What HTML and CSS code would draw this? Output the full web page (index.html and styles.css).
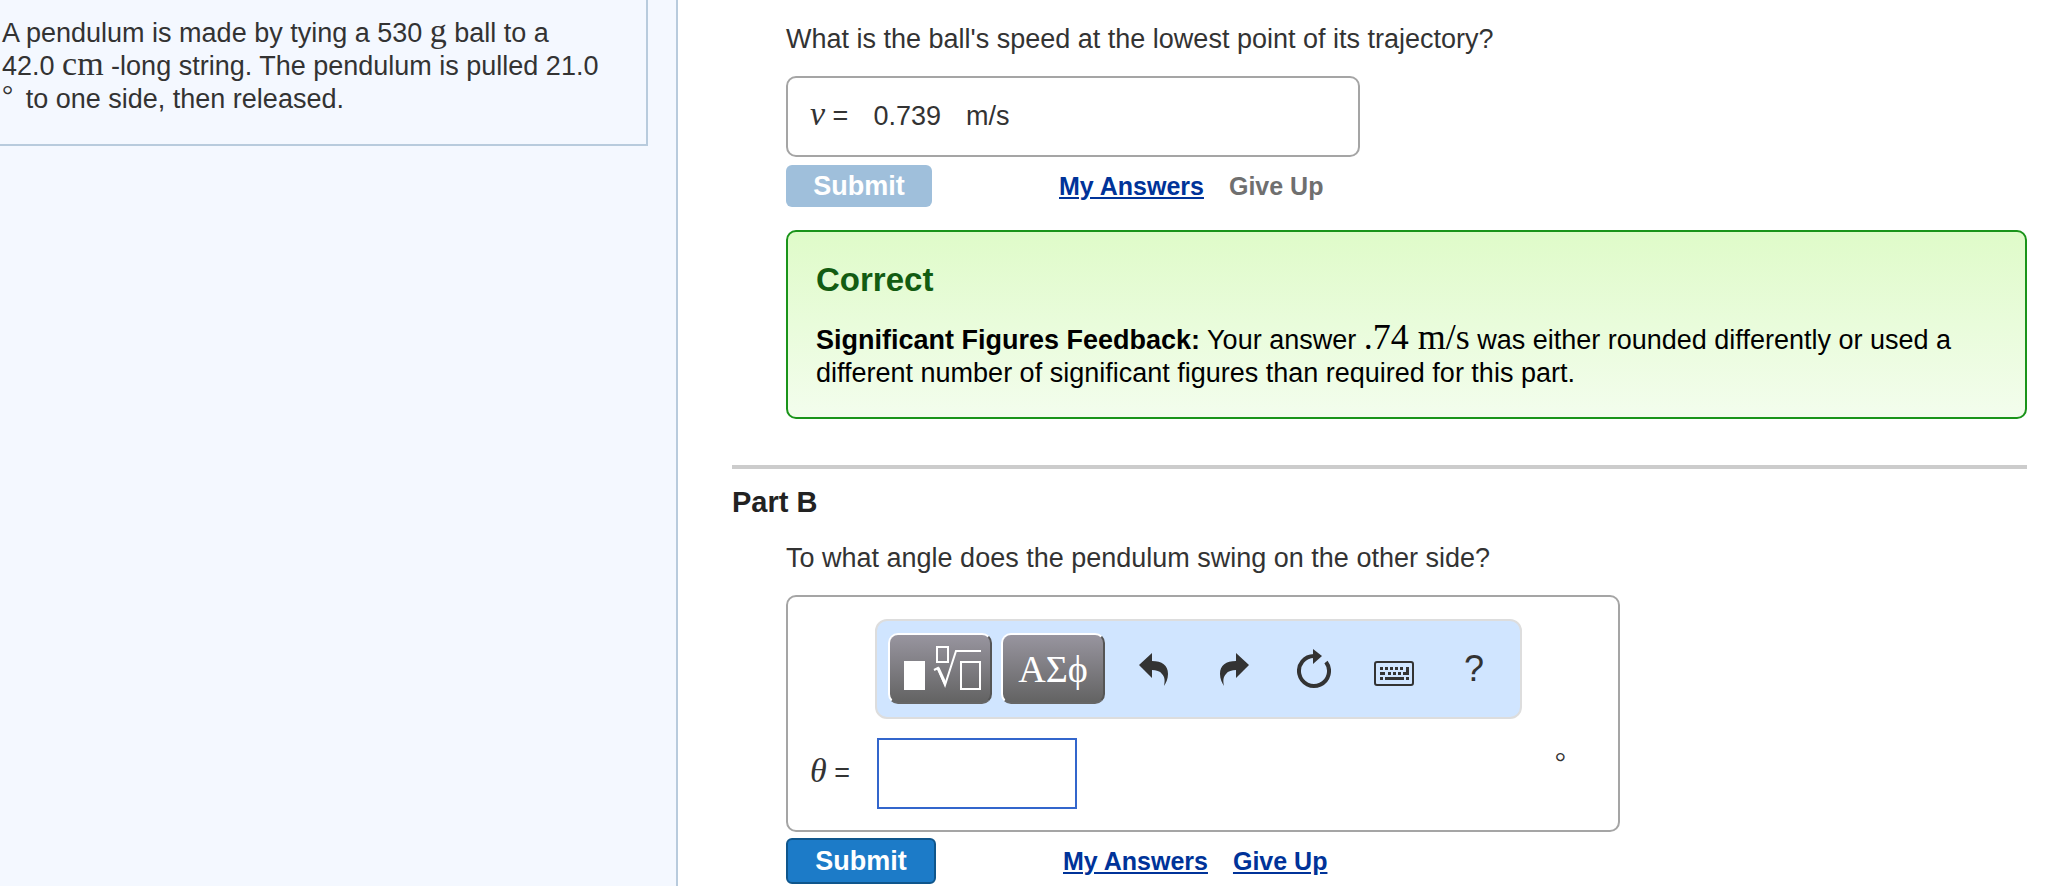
FILE: index.html
```html
<!DOCTYPE html>
<html lang="en">
<head>
  <meta charset="UTF-8" />
  <meta name="viewport" content="width=device-width, initial-scale=1" />
  <title>Pendulum</title>
  <link rel="stylesheet" href="styles.css">
</head>
<body>
  <aside class="sidebar">
    <div class="problem">
      <p>A pendulum is made by tying a 530 <span class="math">g</span> ball to a 42.0&nbsp;<span class="math">cm</span> -long string. The pendulum is pulled 21.0 <span class="math degree">°</span> to one side, then released.</p>
    </div>
  </aside>

  <main>
    <section class="part">
      <p class="question">What is the ball's speed at the lowest point of its trajectory?</p>
      <div class="answer-box answered">
        <span class="variable"><i class="math">v</i> =</span>
        <span>0.739</span>
        <span>m/s</span>
      </div>
      <div class="actions">
        <button type="button" class="submit" disabled>Submit</button>
        <a href="#answers">My Answers</a>
        <span class="disabled-link">Give Up</span>
      </div>
      <div class="feedback">
        <h3>Correct</h3>
        <p><strong>Significant Figures Feedback:</strong> Your answer <span class="math">.74 m/s</span> was either rounded differently or used a different number of significant figures than required for this part.</p>
      </div>
    </section>

    <hr>

    <h2>Part B</h2>
    <form class="part">
      <p class="question">To what angle does the pendulum swing on the other side?</p>
      <div class="answer-box entry">
        <div class="toolbar">
          <button type="button" class="palette" aria-label="Templates">
            <svg width="82" height="46" viewBox="0 0 82 46">
              <rect x="5" y="15" width="21" height="29" fill="#fff"/>
              <g fill="none" stroke="#fff" stroke-width="2">
                <rect x="38" y="1" width="11" height="15"/>
                <path d="M35 24l4-2 7 17L57 5h25"/>
                <path d="M39 22l7 15" stroke-width="3"/>
                <rect x="62" y="16" width="19" height="27"/>
              </g>
            </svg>
          </button>
          <button type="button" class="palette">ΑΣϕ</button>
          <button type="button" class="tool" aria-label="Undo">
            <svg width="30" height="34" viewBox="0 0 30 34">
              <path d="M0 13L13 1v8c10 0 16 4 16 13 0 5-2 9-4 12 1-5 1-9-2-12-2-3-6-4-10-4v8z"/>
            </svg>
          </button>
          <button type="button" class="tool" aria-label="Redo">
            <svg width="30" height="34" viewBox="0 0 30 34">
              <path d="M30 13L17 1v8C7 9 1 13 1 22c0 5 2 9 4 12-1-5-1-9 2-12 2-3 6-4 10-4v8z"/>
            </svg>
          </button>
          <button type="button" class="tool" aria-label="Reset">
            <svg width="34" height="40" viewBox="0 0 34 40">
              <path d="M17 7A15 15 0 1 0 29 13" fill="none" stroke="#333" stroke-width="4"/>
              <path d="M16 0l9 7-9 8z"/>
            </svg>
          </button>
          <button type="button" class="tool keyboard" aria-label="Keyboard">
            <svg width="40" height="25" viewBox="0 0 40 25">
              <rect x="1" y="1" width="38" height="23" rx="2" fill="none" stroke="#333" stroke-width="2"/>
              <path d="M6 6h3v3H6zM11 6h3v3h-3zM16 6h3v3h-3zM21 6h3v3h-3zM26 6h3v3h-3zM6 11h5v3H6zM14 11h3v3h-3zM19 11h3v3h-3zM24 11h3v3h-3zM32 6h3v8h-6v-3h3zM6 16h3v3H6zM11 16h19v3H11zM32 16h3v3h-3z"/>
            </svg>
          </button>
          <button type="button" class="tool">?</button>
        </div>
        <label class="variable" for="theta"><i class="math">θ</i> =</label>
        <input type="text" id="theta">
        <span class="math degree">°</span>
      </div>
      <div class="actions">
        <button type="submit" class="submit">Submit</button>
        <a href="#answers">My Answers</a>
        <a href="#give-up">Give Up</a>
      </div>
    </form>
  </main>
</body>
</html>
```

FILE: styles.css
```css
* {
  box-sizing: border-box;
}
body {
  margin: 0;
  min-height: 100vh;
  display: grid;
  grid-template-columns: minmax(300px, 678px) minmax(0, 1fr);
  font: 27px/33px "Liberation Sans", Arial, sans-serif;
  color: #333;
  background: #fff;
}
p, h2, h3 {
  margin: 0;
}
button, input {
  font: inherit;
}
.sidebar {
  background: #f4f8ff;
  border-right: 2px solid #b8cbdd;
}
.problem {
  margin-right: 28px;
  padding: 17px 30px 28px 2px;
  border: solid #b8cbdd;
  border-width: 0 2px 2px 0;
}
.math {
  font-family: "Liberation Serif", "Times New Roman", serif;
  font-size: 34px;
  line-height: 24px;
}
.degree {
  font-size: 28px;
  line-height: 12px;
  vertical-align: 4px;
}
.problem .degree {
  margin-right: 5px;
}
main {
  padding: 23px 19px 0 54px;
}
.part {
  padding-left: 54px;
}
.answer-box {
  border: 2px solid #a5a5a5;
  border-radius: 10px;
}
.answered {
  display: flex;
  align-items: center;
  gap: 25px;
  max-width: 574px;
  height: 81px;
  margin-top: 20px;
  padding: 0 22px;
}
.actions {
  display: flex;
  align-items: center;
  gap: 25px;
  margin-top: 8px;
  font-size: 25px;
  font-weight: bold;
}
.submit {
  min-width: 150px;
  height: 46px;
  margin-right: 102px;
  padding: 0;
  border: 2px solid #0f568c;
  border-radius: 6px;
  background: #1c7bc8;
  color: #fff;
  font-size: 27px;
}
.submit:disabled {
  min-width: 146px;
  height: 42px;
  border: 0;
  background: #9fbfdb;
}
.actions a {
  color: #039;
}
.disabled-link {
  color: #6f6f6f;
}
.feedback {
  margin-top: 23px;
  padding: 31px 28px 27px;
  border: 2px solid #1a941a;
  border-radius: 10px;
  background: linear-gradient(#dffbc9, #f3fded);
  color: #000;
}
.feedback h3 {
  margin-bottom: 28px;
  font-size: 33px;
  color: #125c12;
}
.feedback .math {
  font-size: 36px;
}
hr {
  height: 4px;
  margin: 46px 0 17px;
  border: 0;
  background: #ccc;
}
h2 {
  font-size: 29px;
  color: #222;
}
form .question {
  margin-top: 23px;
}
form .actions {
  margin-top: 6px;
}
.entry {
  display: grid;
  grid-template-columns: 65px 202px 1fr auto;
  align-items: center;
  row-gap: 19px;
  max-width: 834px;
  margin-top: 20px;
  padding: 22px 52px 21px 22px;
}
.toolbar {
  grid-column: 2 / -1;
  justify-self: start;
  display: flex;
  align-items: center;
  gap: 9px;
  padding: 12px 6px 13px 11px;
  border: 2px solid #ddd;
  border-radius: 12px;
  background: #d0e5ff;
}
.palette {
  width: 104px;
  height: 71px;
  padding: 0;
  border: 2px solid;
  border-color: #fff #555 #666 #fff;
  border-radius: 10px;
  background: linear-gradient(#98959f, #636363);
  color: #fff;
  font: 38px "Liberation Serif", serif;
}
.tool {
  width: 80px;
  height: 71px;
  margin-right: -9px;
  padding: 0;
  border: 0;
  background: none;
  color: #333;
  font-size: 36px;
}
.tool:last-child {
  margin-right: 0;
}
.tool svg, .palette svg {
  display: block;
  margin: auto;
  fill: #333;
}
.keyboard svg {
  position: relative;
  top: 5px;
}
.entry input {
  grid-column: 2;
  height: 71px;
  margin-left: 2px;
  padding: 0 10px;
  border: 2px solid #36c;
}
.entry > .degree {
  grid-column: 4;
  align-self: start;
  line-height: 48px;
}
```
